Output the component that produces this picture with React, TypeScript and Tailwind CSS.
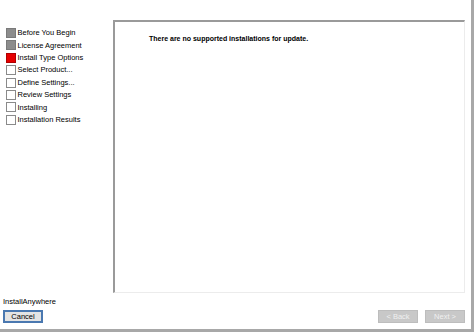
import React from "react";

const steps: { label: string; state: "done" | "current" | "todo" }[] = [
  { label: "Before You Begin", state: "done" },
  { label: "License Agreement", state: "done" },
  { label: "Install Type Options", state: "current" },
  { label: "Select Product...", state: "todo" },
  { label: "Define Settings...", state: "todo" },
  { label: "Review Settings", state: "todo" },
  { label: "Installing", state: "todo" },
  { label: "Installation Results", state: "todo" },
];

export default function App() {
  return (
    <div
      className="w-[474px] h-[332px] bg-white flex overflow-hidden text-black"
      style={{ fontFamily: '"Liberation Sans", Arial, sans-serif' }}
    >
      <div className="flex-1 flex flex-col border-b-[3px] border-[#a8a8a8]">
        <div className="flex flex-1">
          <div className="w-[113px] pt-[28px] pl-[6px] flex flex-col gap-[2.4px]">
            {steps.map((s) => (
              <div key={s.label} className="flex items-center h-[10px] gap-[1.5px]">
                <div
                  className={
                    s.state === "done"
                      ? "w-[10px] h-[10px] bg-[#8c8c8c] border border-[#7a7a7a]"
                      : s.state === "current"
                      ? "w-[10px] h-[10px] bg-[#e60000] border border-[#b00000]"
                      : "w-[10px] h-[10px] bg-white border border-[#8a8a8a]"
                  }
                />
                <span className="text-[7.5px] leading-none text-black">{s.label}</span>
              </div>
            ))}
          </div>
          <div className="flex-1 pt-[20px] pr-[6px] pb-[2px] flex flex-col">
            <div className="flex-1 border-l-2 border-t-2 border-[#9a9a9a] border-r border-r-[#ececec] border-b border-b-[#ececec] pl-[34px] pt-[13px]">
              <div className="text-[7px] font-bold leading-none">
                There are no supported installations for update.
              </div>
            </div>
          </div>
        </div>
        <div className="h-[34px] flex flex-col px-[3px]">
          <div className="text-[7.5px] leading-none mt-[3px] h-[8px] text-black">InstallAnywhere</div>
          <div className="flex mt-[4px] items-start">
            <button className="w-[40px] h-[13px] bg-[#e4e4e4] border-2 border-[#4a78b0] text-[7.5px] leading-none flex items-center justify-center">
              Cancel
            </button>
            <div className="flex-1" />
            <button className="w-[40px] h-[13px] bg-[#c8c8c8] border border-[#bdbdbd] text-[7.5px] leading-none text-[#f0f0f0] flex items-center justify-center mr-[7px]">
              &lt; Back
            </button>
            <button className="w-[40px] h-[13px] bg-[#c8c8c8] border border-[#bdbdbd] text-[7.5px] leading-none text-[#f0f0f0] flex items-center justify-center mr-[3px]">
              Next &gt;
            </button>
          </div>
        </div>
      </div>
      <div className="w-[3px] bg-[#a8a8a8]" />
    </div>
  );
}
